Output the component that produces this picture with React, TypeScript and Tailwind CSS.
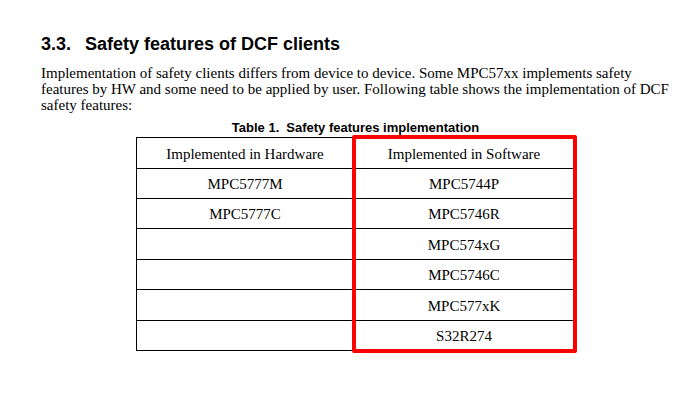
import React from "react";

const rows: { a: string; b: string; h: string }[] = [
  { a: "MPC5777M", b: "MPC5744P", h: "h-[30px]" },
  { a: "MPC5777C", b: "MPC5746R", h: "h-[30px]" },
  { a: "", b: "MPC574xG", h: "h-[31px]" },
  { a: "", b: "MPC5746C", h: "h-[30px]" },
  { a: "", b: "MPC577xK", h: "h-[31px]" },
  { a: "", b: "S32R274", h: "h-[30px]" },
];

export default function App() {
  const serif = { fontFamily: '"Liberation Serif", "Times New Roman", serif' };
  const sans = { fontFamily: '"Liberation Sans", Arial, sans-serif' };
  return (
    <div className="w-[691px] h-[396px] bg-white text-black overflow-hidden pl-[41px] pt-[33px]">
      <h2 className="flex text-[18px] leading-[22px] font-bold" style={sans}>
        <span className="w-[44px]">3.3.</span>
        <span>Safety features of DCF clients</span>
      </h2>
      <p className="mt-[10px] text-[15px] leading-[16px] whitespace-nowrap" style={serif}>
        Implementation of safety clients differs from device to device. Some MPC57xx implements safety
        <br />
        features by HW and some need to be applied by user. Following table shows the implementation of DCF
        <br />
        safety features:
      </p>
      <div className="w-[439px] ml-[95px]">
        <div
          className="mt-[7px] flex justify-center gap-[7px] text-[13px] leading-[15px] font-bold whitespace-nowrap"
          style={sans}
        >
          <span>Table 1.</span>
          <span>Safety features implementation</span>
        </div>
        <div className="relative mt-[2px]">
          <div className="border-x border-t border-black text-[15px]" style={serif}>
            <div className="grid grid-cols-[217px_1fr] h-[31px] border-b border-black">
              <div className="border-r border-black flex items-center justify-center pt-[2px]">
                Implemented in Hardware
              </div>
              <div className="flex items-center justify-center pt-[2px]">Implemented in Software</div>
            </div>
            {rows.map((r, i) => (
              <div key={i} className={"grid grid-cols-[217px_1fr] border-b border-black " + r.h}>
                <div className="border-r border-black flex items-center justify-center pt-[2px]">{r.a}</div>
                <div className="flex items-center justify-center pt-[2px]">{r.b}</div>
              </div>
            ))}
          </div>
          <div className="absolute left-[216px] top-[-2px] w-[225px] h-[218px] border-[4px] border-[#ff0000] rounded-[2px]" />
        </div>
      </div>
    </div>
  );
}
